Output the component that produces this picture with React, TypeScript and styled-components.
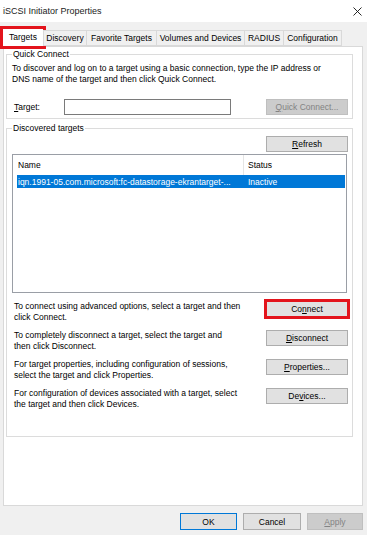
import React from "react";
import styled, { createGlobalStyle } from "styled-components";

const GlobalStyle = createGlobalStyle`
  html, body {
    margin: 0;
    padding: 0;
  }
  body {
    font-family: "Liberation Sans", Arial, sans-serif;
    font-size: 8.5px;
    color: #000;
    background: #f0f0f0;
  }
`;

const tabs = [
  { label: "Targets", width: 42, active: true },
  { label: "Discovery", width: 44 },
  { label: "Favorite Targets", width: 71 },
  { label: "Volumes and Devices", width: 89 },
  { label: "RADIUS", width: 40 },
  { label: "Configuration", width: 59 },
];

const actions = [
  {
    lines: ["To connect using advanced options, select a target and then", "click Connect."],
    button: ["Co", "n", "nect"],
    marked: true,
  },
  {
    lines: ["To completely disconnect a target, select the target and", "then click Disconnect."],
    button: ["", "D", "isconnect"],
  },
  {
    lines: ["For target properties, including configuration of sessions,", "select the target and click Properties."],
    button: ["", "P", "roperties..."],
  },
  {
    lines: ["For configuration of devices associated with a target, select", "the target and then click Devices."],
    button: ["De", "v", "ices..."],
  },
];

const App = () => {
  return (
    <>
      <GlobalStyle />
      <Window>
        <TitleBar>
          <span>iSCSI Initiator Properties</span>
          <svg width="9" height="9" viewBox="0 0 9 9">
            <path d="M0.5 0.5 L8.5 8.5 M8.5 0.5 L0.5 8.5" stroke="#111" strokeWidth="0.9" />
          </svg>
        </TitleBar>
        <TabStrip>
          {tabs.map((t) => (
            <Tab key={t.label} $active={t.active} $w={t.width}>
              {t.label}
            </Tab>
          ))}
        </TabStrip>
        <Panel>
          <Group>
            <Legend>Quick Connect</Legend>
            <Para>
              <Line>To discover and log on to a target using a basic connection, type the IP address or</Line>
              <Line>DNS name of the target and then click Quick Connect.</Line>
            </Para>
            <TargetRow>
              <FieldLabel>
                <u>T</u>arget:
              </FieldLabel>
              <TextInput />
              <Button $disabled>
                <u>Q</u>uick Connect...
              </Button>
            </TargetRow>
          </Group>
          <Group $tall>
            <Legend>Discovered targets</Legend>
            <RefreshRow>
              <Button>
                <u>R</u>efresh
              </Button>
            </RefreshRow>
            <ListView>
              <ListHeader>
                <NameCol>Name</NameCol>
                <StatusCol>Status</StatusCol>
              </ListHeader>
              <ListRow $selected>
                <NameCol>iqn.1991-05.com.microsoft:fc-datastorage-ekrantarget-...</NameCol>
                <StatusCol>Inactive</StatusCol>
              </ListRow>
            </ListView>
            <Actions>
              {actions.map((a) => (
                <ActionRow key={a.button.join("")}>
                  <Para>
                    {a.lines.map((l) => (
                      <Line key={l}>{l}</Line>
                    ))}
                  </Para>
                  <Button $marked={a.marked}>
                    {a.button[0]}
                    <u>{a.button[1]}</u>
                    {a.button[2]}
                  </Button>
                </ActionRow>
              ))}
            </Actions>
          </Group>
        </Panel>
        <Footer>
          <Button $w={57} $h={17} $default>
            OK
          </Button>
          <Button $w={58} $h={17}>
            Cancel
          </Button>
          <Button $w={56} $h={17} $disabled>
            <u>A</u>pply
          </Button>
        </Footer>
      </Window>
    </>
  );
};

export default App;

const Window = styled.div`
  width: 367px;
  height: 535px;
  display: flex;
  flex-direction: column;
  background: #f0f0f0;
  overflow: hidden;
`;

const TitleBar = styled.div`
  height: 22px;
  flex: none;
  background: #fff;
  display: flex;
  align-items: center;
  justify-content: space-between;
  padding: 0 5px 0 3px;
  font-size: 9px;
  color: #222;
`;

const TabStrip = styled.div`
  height: 24px;
  flex: none;
  display: flex;
  align-items: flex-end;
  padding-left: 3px;
  position: relative;
  z-index: 1;
`;

const Tab = styled.div<{ $active?: boolean; $w: number }>`
  width: ${(p) => p.$w}px;
  height: ${(p) => (p.$active ? 19 : 16)}px;
  margin-bottom: ${(p) => (p.$active ? -1 : 0)}px;
  margin-left: -1px;
  box-sizing: border-box;
  display: flex;
  align-items: center;
  justify-content: center;
  background: ${(p) => (p.$active ? "#fff" : "#f0f0f0")};
  border: 1px solid #d9d9d9;
  border-bottom: ${(p) => (p.$active ? "none" : "1px solid #d9d9d9")};
  outline: ${(p) => (p.$active ? "3px solid #e3141c" : "none")};
  outline-offset: -1px;
  white-space: nowrap;
  padding-bottom: ${(p) => (p.$active ? 2 : 0)}px;
`;

const Panel = styled.div`
  height: 460px;
  flex: none;
  box-sizing: border-box;
  margin: 0 4px 0 3px;
  background: #fff;
  border: 1px solid #d9d9d9;
  padding: 2px 9px 0 2px;
  display: flex;
  flex-direction: column;
  gap: 4px;
`;

const Group = styled.fieldset<{ $tall?: boolean }>`
  margin: 0;
  padding: 0 4px 3px 5px;
  border: 1px solid #dcdcdc;
  min-width: 0;
  height: ${(p) => (p.$tall ? "314px" : "auto")};
  box-sizing: border-box;
`;

const Legend = styled.legend`
  padding: 0 1px;
  line-height: 11px;
`;

const Para = styled.div`
  margin-top: 3px;
  line-height: 11px;
`;

const Line = styled.div`
  white-space: nowrap;
`;

const TargetRow = styled.div`
  display: flex;
  align-items: center;
  margin-top: 14px;
`;

const FieldLabel = styled.div`
  width: 52px;
  padding-left: 2px;
  box-sizing: border-box;
`;

const TextInput = styled.div`
  width: 167px;
  height: 16px;
  box-sizing: border-box;
  border: 1px solid #7a7a7a;
  background: #fff;
`;

const Button = styled.div<{
  $disabled?: boolean;
  $marked?: boolean;
  $default?: boolean;
  $w?: number;
  $h?: number;
}>`
  width: ${(p) => p.$w ?? 82}px;
  height: ${(p) => p.$h ?? 16}px;
  flex: none;
  margin-left: auto;
  box-sizing: border-box;
  display: flex;
  align-items: center;
  justify-content: center;
  background: ${(p) => (p.$disabled ? "#cccccc" : "#e1e1e1")};
  color: ${(p) => (p.$disabled ? "#838383" : "#000")};
  border: 1px solid
    ${(p) => (p.$default ? "#0078d7" : p.$disabled ? "#bfbfbf" : "#adadad")};
  outline: ${(p) => (p.$marked ? "3px solid #e3141c" : "none")};
  outline-offset: -1px;
  white-space: nowrap;
`;

const RefreshRow = styled.div`
  display: flex;
  margin-top: 2px;
`;

const ListView = styled.div`
  margin-top: 2px;
  margin-right: 1px;
  height: 139px;
  flex: none;
  box-sizing: border-box;
  border: 1px solid #9a9ea6;
  background: #fff;
`;

const ListHeader = styled.div`
  height: 20px;
  display: flex;
  align-items: center;
  padding-left: 5px;
`;

const NameCol = styled.div`
  width: 225px;
  overflow: hidden;
  white-space: nowrap;
`;

const StatusCol = styled.div`
  flex: 1;
  padding-left: 4px;
  height: 100%;
  display: flex;
  align-items: center;
  border-left: 1px solid #e5e5e5;
`;

const ListRow = styled.div<{ $selected?: boolean }>`
  height: 13px;
  display: flex;
  align-items: center;
  margin: 0 1px 0 4px;
  padding-left: 1px;
  background: ${(p) => (p.$selected ? "#0078d7" : "transparent")};
  color: ${(p) => (p.$selected ? "#fff" : "#000")};

  ${StatusCol} {
    border-left: none;
    padding-left: 5px;
  }
`;

const Actions = styled.div`
  margin-top: 8px;
  display: flex;
  flex-direction: column;
  gap: 6px;
`;

const ActionRow = styled.div`
  height: 23px;
  display: flex;
  align-items: flex-start;
  padding-left: 2px;

  ${Para} {
    margin-top: 0;
    padding-top: 0;
  }
`;

const Footer = styled.div`
  flex: 1;
  display: flex;
  justify-content: flex-end;
  align-items: flex-start;
  gap: 6px;
  padding: 7px 4px 0 0;

  ${Button} {
    margin-left: 0;
  }
`;
